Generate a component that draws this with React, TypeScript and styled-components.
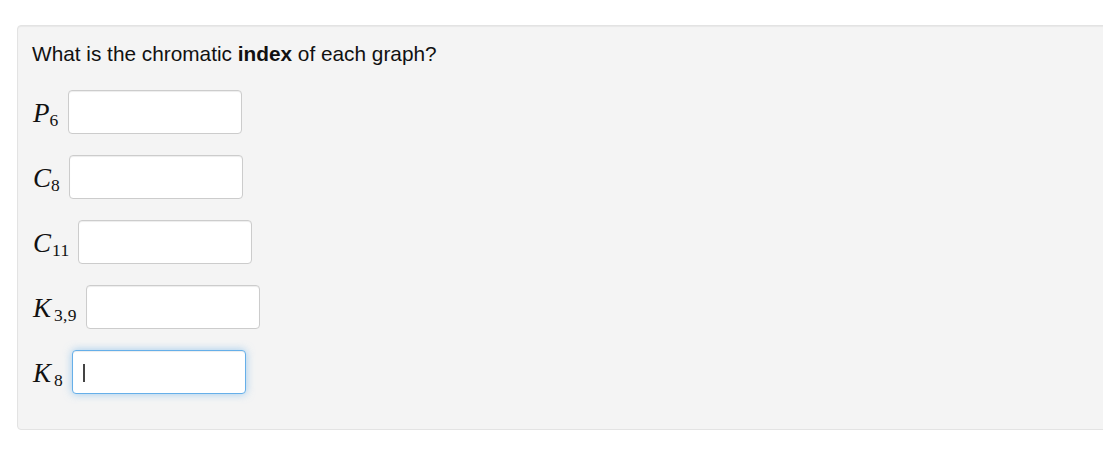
import React from "react";
import styled, { createGlobalStyle, css } from "styled-components";

const Global = createGlobalStyle`
  html, body { margin: 0; padding: 0; background: #fff; overflow: hidden; }
  body { font-family: "Liberation Sans", Arial, sans-serif; }
`;

const Page = styled.div`
  width: 1103px;
  height: 465px;
  padding: 25px 0 0 17px;
  box-sizing: border-box;
  overflow: hidden;
`;

const Well = styled.div`
  width: 1120px;
  height: 405px;
  box-sizing: border-box;
  background: #f4f4f4;
  border: 1px solid #e3e3e3;
  border-radius: 4px;
  box-shadow: inset 0 1px 1px rgba(0, 0, 0, 0.05);
  padding: 14px 14px 0 14px;
`;

const Question = styled.p`
  margin: 0 0 22px 0;
  font-size: 20.8px;
  line-height: 28px;
  color: #111;
`;

const Rows = styled.div`
  display: flex;
  flex-direction: column;
  gap: 21px;
`;

const Row = styled.div`
  display: flex;
  align-items: center;
  height: 44px;
`;

const MathLabel = styled.span`
  font-family: "Liberation Serif", "Times New Roman", serif;
  font-size: 27px;
  color: #111;
  padding-left: 1px;
  display: inline-flex;
  align-items: baseline;
  margin-right: 9px;
  margin-top: 2px;
`;

const Var = styled.i<{ $kern: number }>`
  font-style: italic;
  padding-right: ${(p) => p.$kern}px;
`;

const Sub = styled.span`
  font-size: 17.5px;
  position: relative;
  top: 4px;
  letter-spacing: 0.3px;
`;

const InputWrap = styled.div`
  position: relative;
`;

const Field = styled.input<{ $focused?: boolean }>`
  width: 174px;
  height: 44px;
  box-sizing: border-box;
  border: 1px solid #ccc;
  border-radius: 4px;
  background: #fff;
  padding: 6px 12px;
  font-size: 16px;
  font-family: "Liberation Sans", Arial, sans-serif;
  box-shadow: inset 0 1px 1px rgba(0, 0, 0, 0.075);
  outline: none;
  caret-color: transparent;
  ${(p) =>
    p.$focused &&
    css`
      border-color: #66afe9;
      box-shadow: inset 0 1px 1px rgba(0, 0, 0, 0.075), 0 0 8px rgba(102, 175, 233, 0.6);
    `}
`;

const Caret = styled.span`
  position: absolute;
  left: 11px;
  top: 14px;
  width: 2px;
  height: 18px;
  background: #444;
`;

const items: { v: string; s: string; kern: number; focused?: boolean }[] = [
  { v: "P", s: "6", kern: 0 },
  { v: "C", s: "8", kern: 0 },
  { v: "C", s: "11", kern: 1 },
  { v: "K", s: "3,9", kern: 3 },
  { v: "K", s: "8", kern: 3, focused: true },
];

export default function App() {
  return (
    <Page>
      <Global />
      <Well>
        <Question>
          What is the chromatic <b>index</b> of each graph?
        </Question>
        <Rows>
          {items.map((it, i) => (
            <Row key={i}>
              <MathLabel>
                <Var $kern={it.kern}>{it.v}</Var>
                <Sub>{it.s}</Sub>
              </MathLabel>
              <InputWrap>
                <Field type="text" $focused={it.focused} aria-label={it.v + it.s} />
                {it.focused && <Caret />}
              </InputWrap>
            </Row>
          ))}
        </Rows>
      </Well>
    </Page>
  );
}
